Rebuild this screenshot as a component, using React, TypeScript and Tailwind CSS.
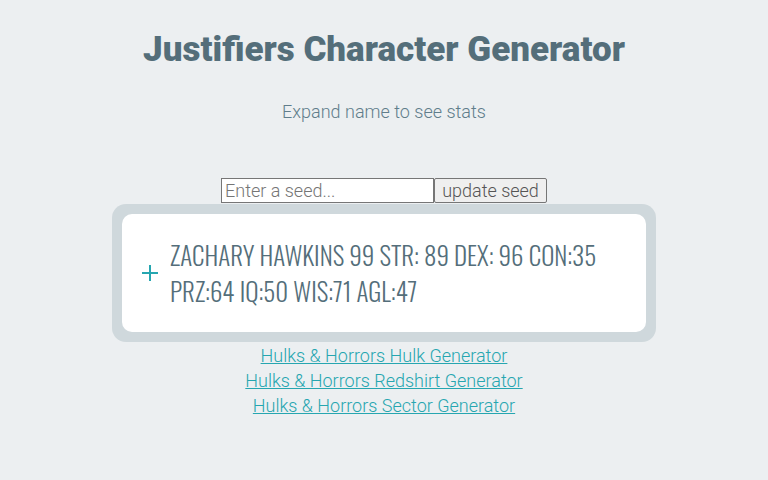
import { useState } from 'react'

const links = [
  'Hulks & Horrors Hulk Generator',
  'Hulks & Horrors Redshirt Generator',
  'Hulks & Horrors Sector Generator',
]

export default function App() {
  const [seed, setSeed] = useState('')

  return (
    <div className="min-h-[480px] bg-[#eceff1] font-['Roboto',sans-serif] text-[#546e7a] flex flex-col items-center pt-[30px]">
      <h1 className="text-[35px] leading-[40px] font-black">Justifiers Character Generator</h1>
      <p className="mt-[30px] text-[18px] leading-[24px] font-light text-[#607d8b]">Expand name to see stats</p>

      <div className="mt-[54px] flex items-stretch h-[25px]">
        <input
          value={seed}
          onChange={(e) => setSeed(e.target.value)}
          placeholder="Enter a seed..."
          className="w-[213px] h-[25px] bg-white border border-[#767676] px-[3px] text-[18px] font-light text-[#333] placeholder:text-[#757575] outline-none"
        />
        <button className="w-[113px] h-[25px] bg-[#efefef] border border-[#767676] rounded-[2px] text-[18px] font-light text-[#555] leading-none">
          update seed
        </button>
      </div>

      <div className="mt-[1px] w-[544px] bg-[#cfd8dc] rounded-[14px] p-[10px]">
        <div className="bg-white rounded-[10px] h-[118px] flex items-center pl-[19px]">
          <svg width="18" height="18" viewBox="0 0 18 18" className="shrink-0 text-[#26a6b0]">
            <path d="M9 1v16M1 9h16" stroke="currentColor" strokeWidth="2" fill="none" />
          </svg>
          <div className="ml-[11px] font-['Oswald','Liberation_Sans_Narrow','DejaVu_Sans_Condensed',sans-serif] font-light text-[25px] leading-[36px] text-[#546e7a] whitespace-nowrap">
            ZACHARY HAWKINS 99 STR: 89 DEX: 96 CON:35
            <br />
            PRZ:64 IQ:50 WIS:71 AGL:47
          </div>
        </div>
      </div>

      <div className="mt-[1px] flex flex-col items-center">
        {links.map((l) => (
          <a key={l} href="#" className="text-[18px] leading-[25px] font-light text-[#26a6b0] underline">
            {l}
          </a>
        ))}
      </div>
    </div>
  )
}
